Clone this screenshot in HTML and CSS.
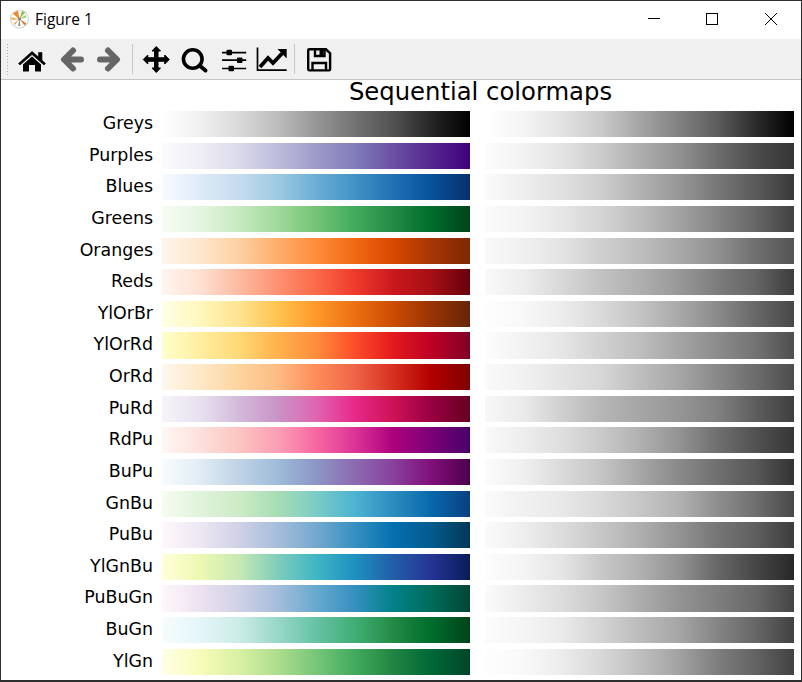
FILE: index.html
```html
<!DOCTYPE html>
<html lang="en">
<head>
<meta charset="utf-8">
<title>Figure 1</title>
<link rel="stylesheet" href="styles.css">
</head>
<body>
<div class="window">
  <header class="titlebar">
    <svg class="app-icon" width="20" height="20" viewBox="0 0 20 20">
      <circle cx="9.5" cy="10" r="9" fill="#fff" stroke="#d4d4d4" stroke-width="1.2"/>
      <path d="M9.5 10.5L2.8 4.5 8 1.5Z" fill="#f0862a"/>
      <path d="M9.5 10.5L1.5 8 1.3 11Z" fill="#eeb84a"/>
      <path d="M9.5 10L12 1.8 15.2 3.6Z" fill="#8cbf5a"/>
      <path d="M9.5 10L15.8 6 16.5 8.5Z" fill="#a8c96c"/>
      <path d="M9 9.5L16.5 14.5 14.5 16.5Z" fill="#e07a3c"/>
      <path d="M9.5 10L10.5 17 8 17Z" fill="#8a9a9a"/>
      <path d="M9.5 10L5 16 3.5 14.5Z" fill="#e8b070"/>
      <circle cx="9.5" cy="10" r="1.4" fill="#777"/>
    </svg>
    <span class="window-title">Figure 1</span>
    <div class="caption">
      <span class="caption-btn"><svg width="14" height="14" viewBox="0 0 14 14"><path d="M1 6.5H13" stroke="#000"/></svg></span>
      <span class="caption-btn"><svg width="14" height="14" viewBox="0 0 14 14"><rect x="1.5" y="1.5" width="11" height="11" fill="none" stroke="#000"/></svg></span>
      <span class="caption-btn"><svg width="14" height="14" viewBox="0 0 14 14"><path d="M1 1L13 13M13 1L1 13" stroke="#000"/></svg></span>
    </div>
  </header>

  <nav class="toolbar">
    <span class="grip"></span>
    <span class="tool"><svg width="32" height="32" viewBox="0 0 32 32"><path stroke="#000" stroke-width=".6" d="M16 8.5L22.5 14V9.5H26V17.3L29.5 20.5 28 22 16 11.5 4 22 2.5 20.5Z"/><path d="M7 21.5L16 13.5 25 21.5V28.5H19V22H13V28.5H7Z"/></svg></span>
    <span class="tool"><svg width="32" height="32" viewBox="0 0 32 32" class="arrow"><path d="M26 16.5H10M18 7.5L9 16.5 18 25.5"/></svg></span>
    <span class="tool"><svg width="32" height="32" viewBox="0 0 32 32" class="arrow"><path d="M7 16.5H23M15 7.5L24 16.5 15 25.5"/></svg></span>
    <span class="sep"></span>
    <span class="tool"><svg width="32" height="32" viewBox="0 0 32 32"><path stroke="#000" stroke-width="1" stroke-linejoin="round" d="M16.25 3.5L20.5 8H18V14.75H24.75V12L29.25 16.5 24.75 21V18.25H18V25H20.5L16.25 29.5 12 25H14.5V18.25H7.75V21L3.25 16.5 7.75 12V14.75H14.5V8H12Z"/></svg></span>
    <span class="tool"><svg width="32" height="32" viewBox="0 0 32 32"><circle cx="14.75" cy="16" r="9.3" fill="none" stroke="#000" stroke-width="3.6"/><path d="M21.5 22.5L27.5 27.5" stroke="#000" stroke-width="4" stroke-linecap="round"/></svg></span>
    <span class="tool"><svg width="32" height="32" viewBox="0 0 32 32"><path d="M5 9.6H29.2M5 17.2H29.2M5 25.5H29.2" stroke="#000" stroke-width="1.7"/><rect x="9.5" y="6.8" width="5.5" height="5.5" rx="1"/><rect x="20" y="14.4" width="5.5" height="5.5" rx="1"/><rect x="11.5" y="22.7" width="5.5" height="5.5" rx="1"/></svg></span>
    <span class="tool"><svg width="32" height="32" viewBox="0 0 32 32"><path d="M2.5 4.5V27.2H31.7" fill="none" stroke="#000" stroke-width="1.7"/><path d="M5 24L13 15 18 20 27 10.5" fill="none" stroke="#000" stroke-width="3.8"/><path d="M22.5 6H31.7V15.5Z"/></svg></span>
    <span class="sep"></span>
    <span class="tool"><svg width="32" height="32" viewBox="0 0 32 32" class="save"><path class="save-line" d="M6.5 6.3H24L28.1 10.3V26.2Q28.1 27.4 27 27.4H7.5Q6.2 27.4 6.2 26.2V7.3Q6.2 6.3 7 6.3Z"/><path class="save-line" d="M13 6.5V13H22.5V6.5"/><rect x="17.5" y="6.5" width="4" height="6"/><path class="save-line" d="M10.5 27V20H24V27"/></svg></span>
  </nav>

  <main class="figure">
    <h1 class="figure-title">Sequential colormaps</h1>
    <div class="maps">
      <div class="label">Greys</div><div class="bar c-greys"></div><div class="bar g-greys"></div>
      <div class="label">Purples</div><div class="bar c-purples"></div><div class="bar g-purples"></div>
      <div class="label">Blues</div><div class="bar c-blues"></div><div class="bar g-blues"></div>
      <div class="label">Greens</div><div class="bar c-greens"></div><div class="bar g-greens"></div>
      <div class="label">Oranges</div><div class="bar c-oranges"></div><div class="bar g-oranges"></div>
      <div class="label">Reds</div><div class="bar c-reds"></div><div class="bar g-reds"></div>
      <div class="label">YlOrBr</div><div class="bar c-ylorbr"></div><div class="bar g-ylorbr"></div>
      <div class="label">YlOrRd</div><div class="bar c-ylorrd"></div><div class="bar g-ylorrd"></div>
      <div class="label">OrRd</div><div class="bar c-orrd"></div><div class="bar g-orrd"></div>
      <div class="label">PuRd</div><div class="bar c-purd"></div><div class="bar g-purd"></div>
      <div class="label">RdPu</div><div class="bar c-rdpu"></div><div class="bar g-rdpu"></div>
      <div class="label">BuPu</div><div class="bar c-bupu"></div><div class="bar g-bupu"></div>
      <div class="label">GnBu</div><div class="bar c-gnbu"></div><div class="bar g-gnbu"></div>
      <div class="label">PuBu</div><div class="bar c-pubu"></div><div class="bar g-pubu"></div>
      <div class="label">YlGnBu</div><div class="bar c-ylgnbu"></div><div class="bar g-ylgnbu"></div>
      <div class="label">PuBuGn</div><div class="bar c-pubugn"></div><div class="bar g-pubugn"></div>
      <div class="label">BuGn</div><div class="bar c-bugn"></div><div class="bar g-bugn"></div>
      <div class="label">YlGn</div><div class="bar c-ylgn"></div><div class="bar g-ylgn"></div>
    </div>
  </main>
</div>
</body>
</html>
```
FILE: styles.css
```css
* { box-sizing: border-box; }
html, body { margin: 0; padding: 0; background: #fff; }
.window {
  width: 802px; height: 682px; overflow: hidden;
  display: flex; flex-direction: column;
  background: #fff;
  border: 1px solid #2e2e2e; border-bottom-width: 2px;
}
.titlebar {
  height: 38px; flex: none;
  display: flex; align-items: center;
  padding: 0 0 2px 9px;
}
.app-icon { flex: none; margin-right: 5px; }
.window-title { font: 15.5px/20px "Open Sans", "Noto Sans", sans-serif; color: #000; }
.caption { margin-left: auto; display: flex; margin-right: 1px; }
.caption-btn { width: 58px; height: 36px; display: flex; align-items: center; justify-content: center; }
.caption-btn:nth-child(1) { width: 56px; }
.caption-btn:nth-child(2) { width: 60px; }

.toolbar {
  height: 41px; flex: none;
  display: flex; align-items: center;
  background: #f0f0f0;
  border-bottom: 1px solid #c4c4c4;
  padding-left: 5px;
}
.grip {
  width: 3px; height: 33px; margin-right: 4px; flex: none;
  background-image: radial-gradient(circle, #b0b0b0 0.8px, transparent 1px);
  background-size: 3px 3px;
}
.tool { width: 38.5px; height: 32px; flex: none; display: flex; justify-content: center; }
.tool svg { display: block; }
.arrow path { fill: none; stroke: #666; stroke-width: 6; stroke-linecap: round; stroke-linejoin: round; }
.save-line { fill: none; stroke: #000; stroke-width: 2.4; }
.sep { width: 1px; height: 30px; margin: 0 3.5px; background: #c8c8c8; flex: none; }

.figure { flex: 1; min-height: 0; color: #000; font-family: "DejaVu Sans", sans-serif; }
.figure-title {
  margin: 0 7px 7px 166px;
  font-size: 24.3px; line-height: 24px; font-weight: 400;
  text-align: center;
}
.maps {
  display: grid;
  grid-template-columns: 152px 308px 309px;
  grid-auto-rows: 26.2px;
  column-gap: 9px;
  row-gap: 5.45px;
}
.maps .bar:nth-child(3n) { margin-left: 6px; margin-right: -6px; }
.label { font-size: 17.4px; line-height: 24px; text-align: right; }

.c-greys { background: linear-gradient(90deg,#ffffff,#f0f0f0,#d9d9d9,#bdbdbd,#969696,#737373,#525252,#252525,#000000); }
.c-purples { background: linear-gradient(90deg,#fcfbfd,#efedf5,#dadaeb,#bcbddc,#9e9ac8,#807dba,#6a51a3,#54278f,#3f007d); }
.c-blues { background: linear-gradient(90deg,#f7fbff,#deebf7,#c6dbef,#9ecae1,#6baed6,#4292c6,#2171b5,#08519c,#08306b); }
.c-greens { background: linear-gradient(90deg,#f7fcf5,#e5f5e0,#c7e9c0,#a1d99b,#74c476,#41ab5d,#238b45,#006d2c,#00441b); }
.c-oranges { background: linear-gradient(90deg,#fff5eb,#fee6ce,#fdd0a2,#fdae6b,#fd8d3c,#f16913,#d94801,#a63603,#7f2704); }
.c-reds { background: linear-gradient(90deg,#fff5f0,#fee0d2,#fcbba1,#fc9272,#fb6a4a,#ef3b2c,#cb181d,#a50f15,#67000d); }
.c-ylorbr { background: linear-gradient(90deg,#ffffe5,#fff7bc,#fee391,#fec44f,#fe9929,#ec7014,#cc4c02,#993404,#662506); }
.c-ylorrd { background: linear-gradient(90deg,#ffffcc,#ffeda0,#fed976,#feb24c,#fd8d3c,#fc4e2a,#e31a1c,#bd0026,#800026); }
.c-orrd { background: linear-gradient(90deg,#fff7ec,#fee8c8,#fdd49e,#fdbb84,#fc8d59,#ef6548,#d7301f,#b30000,#7f0000); }
.c-purd { background: linear-gradient(90deg,#f7f4f9,#e7e1ef,#d4b9da,#c994c7,#df65b0,#e7298a,#ce1256,#980043,#67001f); }
.c-rdpu { background: linear-gradient(90deg,#fff7f3,#fde0dd,#fcc5c0,#fa9fb5,#f768a1,#dd3497,#ae017e,#7a0177,#49006a); }
.c-bupu { background: linear-gradient(90deg,#f7fcfd,#e0ecf4,#bfd3e6,#9ebcda,#8c96c6,#8c6bb1,#88419d,#810f7c,#4d004b); }
.c-gnbu { background: linear-gradient(90deg,#f7fcf0,#e0f3db,#ccebc5,#a8ddb5,#7bccc4,#4eb3d3,#2b8cbe,#0868ac,#084081); }
.c-pubu { background: linear-gradient(90deg,#fff7fb,#ece7f2,#d0d1e6,#a6bddb,#74a9cf,#3690c0,#0570b0,#045a8d,#023858); }
.c-ylgnbu { background: linear-gradient(90deg,#ffffd9,#edf8b1,#c7e9b4,#7fcdbb,#41b6c4,#1d91c0,#225ea8,#253494,#081d58); }
.c-pubugn { background: linear-gradient(90deg,#fff7fb,#ece2f0,#d0d1e6,#a6bddb,#67a9cf,#3690c0,#02818a,#016c59,#014636); }
.c-bugn { background: linear-gradient(90deg,#f7fcfd,#e5f5f9,#ccece6,#99d8c9,#66c2a4,#41ae76,#238b45,#006d2c,#00441b); }
.c-ylgn { background: linear-gradient(90deg,#ffffe5,#f7fcb9,#d9f0a3,#addd8e,#78c679,#41ab5d,#238443,#006837,#004529); }

.g-greys { background: linear-gradient(90deg,#ffffff,#f4f4f4,#e2e2e2,#cacaca,#a5a5a5,#828282,#5e5e5e,#2c2c2c,#000000); }
.g-purples { background: linear-gradient(90deg,#fcfcfc,#f2f2f2,#e3e3e3,#cccccc,#aeaeae,#929292,#6e6e6e,#4c4c4c,#353535); }
.g-blues { background: linear-gradient(90deg,#fbfbfb,#eeeeee,#e0e0e0,#cecece,#b2b2b2,#979797,#787878,#5a5a5a,#393939); }
.g-greens { background: linear-gradient(90deg,#fbfbfb,#f3f3f3,#e6e6e6,#d4d4d4,#bdbdbd,#a3a3a3,#858585,#676767,#414141); }
.g-oranges { background: linear-gradient(90deg,#f9f9f9,#f0f0f0,#e3e3e3,#cfcfcf,#bebebe,#a9a9a9,#919191,#6f6f6f,#555555); }
.g-reds { background: linear-gradient(90deg,#f9f9f9,#ededed,#d8d8d8,#c2c2c2,#afafaf,#999999,#7d7d7d,#656565,#3d3d3d); }
.g-ylorbr { background: linear-gradient(90deg,#fefefe,#f8f8f8,#ececec,#dadada,#c4c4c4,#a9a9a9,#8b8b8b,#686868,#474747); }
.g-ylorrd { background: linear-gradient(90deg,#fdfdfd,#f2f2f2,#e6e6e6,#d1d1d1,#bebebe,#a5a5a5,#8c8c8c,#737373,#4e4e4e); }
.g-orrd { background: linear-gradient(90deg,#fafafa,#f1f1f1,#e4e4e4,#d7d7d7,#bebebe,#a7a7a7,#898989,#6c6c6c,#4c4c4c); }
.g-purd { background: linear-gradient(90deg,#f8f8f8,#eaeaea,#cfcfcf,#b6b6b6,#a6a6a6,#969696,#818181,#5e5e5e,#3e3e3e); }
.g-rdpu { background: linear-gradient(90deg,#fafafa,#ededed,#dedede,#cacaca,#b1b1b1,#949494,#707070,#525252,#363636); }
.g-bupu { background: linear-gradient(90deg,#fcfcfc,#efefef,#dadada,#c5c5c5,#a7a7a7,#8a8a8a,#707070,#585858,#333333); }
.g-gnbu { background: linear-gradient(90deg,#fbfbfb,#f1f1f1,#e8e8e8,#d9d9d9,#c7c7c7,#b2b2b2,#8f8f8f,#6f6f6f,#484848); }
.g-pubu { background: linear-gradient(90deg,#fbfbfb,#eeeeee,#dcdcdc,#c7c7c7,#afafaf,#949494,#767676,#5f5f5f,#3c3c3c); }
.g-ylgnbu { background: linear-gradient(90deg,#fdfdfd,#f4f4f4,#e5e5e5,#c8c8c8,#b1b1b1,#939393,#686868,#474747,#282828); }
.g-pubugn { background: linear-gradient(90deg,#fbfbfb,#ececec,#dcdcdc,#c7c7c7,#adadad,#949494,#7f7f7f,#696969,#444444); }
.g-bugn { background: linear-gradient(90deg,#fcfcfc,#f5f5f5,#eaeaea,#d4d4d4,#bcbcbc,#a6a6a6,#858585,#676767,#414141); }
.g-ylgn { background: linear-gradient(90deg,#fefefe,#f9f9f9,#ececec,#d8d8d8,#bfbfbf,#a3a3a3,#7f7f7f,#636363,#424242); }
```
